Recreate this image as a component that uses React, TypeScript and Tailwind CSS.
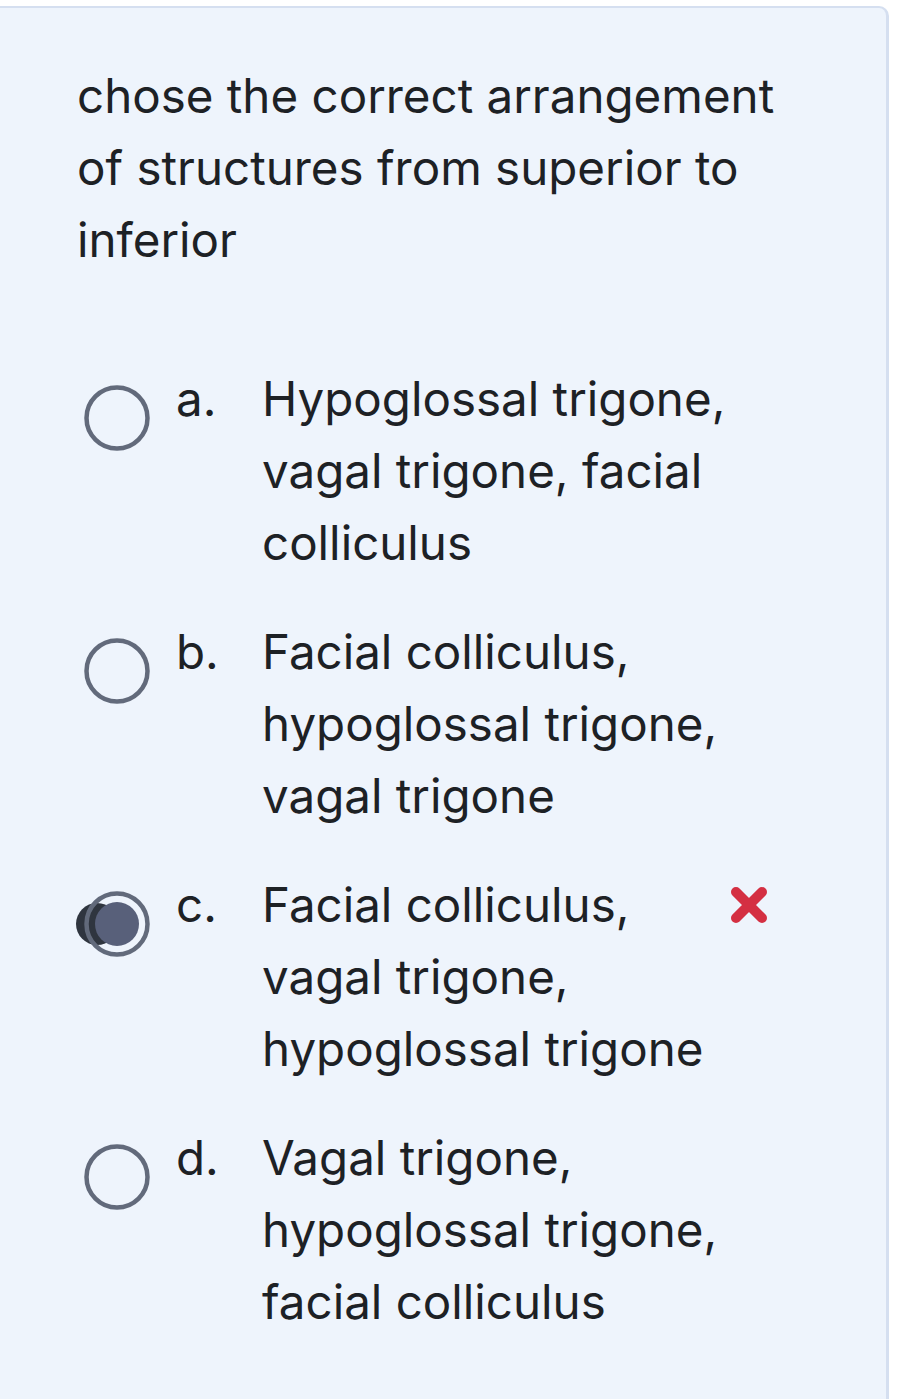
const OPTIONS = [
  { letter: "a.", lines: ["Hypoglossal trigone,", "vagal trigone, facial", "colliculus"] },
  { letter: "b.", lines: ["Facial colliculus,", "hypoglossal trigone,", "vagal trigone"] },
  { letter: "c.", lines: ["Facial colliculus,", "vagal trigone,", "hypoglossal trigone"], checked: true, wrong: true },
  { letter: "d.", lines: ["Vagal trigone,", "hypoglossal trigone,", "facial colliculus"] },
];

function Radio({ checked }: { checked?: boolean }) {
  return (
    <svg width="90" height="80" viewBox="0 0 90 80" className="shrink-0 overflow-visible">
      {checked && <circle cx="22" cy="40" r="21" fill="#2f353f" />}
      {checked && <circle cx="42" cy="40" r="22" fill="#58607a" />}
      <circle cx="42" cy="40" r="30.5" fill="none" stroke="#626a7b" strokeWidth="4.5" />
    </svg>
  );
}

export default function App() {
  return (
    <div className="min-h-[1399px] w-[905px] bg-white pt-[6px] font-['Inter',sans-serif] text-[#1d2125]">
      <div className="w-[889px] min-h-[1393px] rounded-tr-[10px] border-t-2 border-r-[3px] border-[#d5dff0] bg-[#eef4fc] pl-[77px] pt-[52px]">
        <p className="text-[47.5px] leading-[72px]">
          chose the correct arrangement
          <br />
          of structures from superior to
          <br />
          inferior
        </p>

        <div className="mt-[87px] flex flex-col gap-[37px]">
          {OPTIONS.map((o) => (
            <div key={o.letter} className="flex items-start">
              <div className="-ml-[2px] mt-[15px] w-[101px]">
                <Radio checked={o.checked} />
              </div>
              <div className="w-[86px] text-[47.5px] leading-[72px]">{o.letter}</div>
              <div className="w-[466px] text-[47.5px] leading-[72px]">
                {o.lines.map((l) => (
                  <div key={l}>{l}</div>
                ))}
              </div>
              {o.wrong && (
                <svg width="42" height="42" viewBox="0 0 42 42" className="mt-[15px]">
                  <path d="M8 8 L34 34 M34 8 L8 34" stroke="#d42f42" strokeWidth="10" strokeLinecap="round" />
                </svg>
              )}
            </div>
          ))}
        </div>
      </div>
    </div>
  );
}
